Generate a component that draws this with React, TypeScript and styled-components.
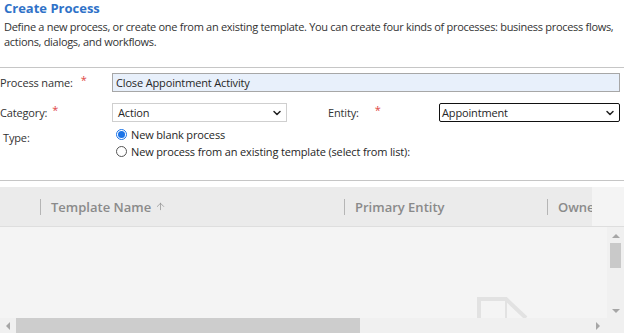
import React from 'react'
import styled, { createGlobalStyle } from 'styled-components'
import { ChevronDown, ArrowUp } from 'lucide-react'

const GlobalStyle = createGlobalStyle`
    html, body {
        margin: 0;
        padding: 0;
        background: #ffffff;
        overflow: hidden;
    }
    body {
        font-family: "Open Sans", "Noto Sans", sans-serif;
        color: #262626;
    }
`

const Page = styled.div`
    width: 624px;
    height: 333px;
    display: flex;
    flex-direction: column;
    overflow: hidden;
`

const Intro = styled.div`
    padding: 1px 4px 0;
    height: 67px;
    box-sizing: border-box;
`

const Title = styled.h1`
    margin: 0;
    font-size: 13px;
    line-height: 15px;
    font-weight: 700;
    color: #2f72c8;
`

const Description = styled.p`
    margin: 3px 0 0;
    font-size: 11px;
    line-height: 15px;
    color: #333;
    letter-spacing: -0.3px;
    white-space: nowrap;
`

const Rule = styled.div`
    height: 1px;
    background: #c6c6c6;
    flex-shrink: 0;
`

const Form = styled.div`
    display: grid;
    grid-template-columns: 112px 175px 152px 181px;
    grid-template-rows: 30px 25px auto;
    padding-top: 5px;
    height: 112px;
    box-sizing: border-box;
`

const Label = styled.div<{ $indent?: number }>`
    font-size: 11px;
    color: #333;
    display: flex;
    align-items: center;
    height: 19px;
    padding-left: ${({ $indent }) => $indent ?? 0}px;
    letter-spacing: -0.15px;
`

const Required = styled.span<{ $gap: number }>`
    color: #e04646;
    font-size: 11px;
    margin-left: ${({ $gap }) => $gap}px;
    position: relative;
    top: -3px;
`

const TextInput = styled.div`
    grid-column: 2 / 5;
    height: 19px;
    box-sizing: border-box;
    border: 1px solid #a7a7a7;
    background: #e8f0fb;
    font-size: 11px;
    padding-left: 3px;
    display: flex;
    align-items: center;
    letter-spacing: -0.15px;
`

const Select = styled.div<{ $focused?: boolean }>`
    height: 19px;
    box-sizing: border-box;
    border: ${({ $focused }) => ($focused ? '1.5px solid #111' : '1px solid #cfcfcf')};
    border-radius: ${({ $focused }) => ($focused ? '2px' : '0')};
    font-size: 11px;
    padding: 0 3px 0 ${({ $focused }) => ($focused ? '2px' : '5px')};
    display: flex;
    align-items: center;
    justify-content: space-between;
    background: #fff;
    letter-spacing: -0.15px;
`

const Options = styled.div`
    grid-column: 2 / 5;
    display: flex;
    flex-direction: column;
    padding-left: 4px;
    margin-top: -2px;
`

const Option = styled.label`
    display: flex;
    align-items: center;
    gap: 4px;
    font-size: 11px;
    line-height: 17px;
    letter-spacing: -0.15px;
`

const Radio = styled.span<{ $checked?: boolean }>`
    width: 11px;
    height: 11px;
    border-radius: 50%;
    box-sizing: border-box;
    border: 1px solid ${({ $checked }) => ($checked ? '#1a73e8' : '#555')};
    display: flex;
    align-items: center;
    justify-content: center;
    &::after {
        content: "";
        width: 7px;
        height: 7px;
        border-radius: 50%;
        background: ${({ $checked }) => ($checked ? '#1a73e8' : 'transparent')};
    }
`

const Grid = styled.div`
    margin-top: 6px;
    flex: 1;
    display: grid;
    grid-template-columns: 1fr 17px;
    grid-template-rows: 40px 1fr 15px;
    background: #f4f4f4;
`

const HeaderRow = styled.div`
    background: #ebebeb;
    border-bottom: 1px solid #dedede;
    display: flex;
    align-items: center;
    overflow: hidden;
`

const HeaderCell = styled.div<{ $width: number }>`
    width: ${({ $width }) => $width}px;
    flex-shrink: 0;
    display: flex;
    align-items: center;
    gap: 4px;
    font-size: 13px;
    font-weight: 600;
    color: #8a8a8a;
    white-space: nowrap;
    overflow: hidden;
    &::before {
        content: "";
        flex-shrink: 0;
        width: 1px;
        height: 16px;
        background: #b5b5b5;
        margin-right: 6px;
    }
`

const HeaderSpacer = styled.div`
    width: 40px;
    flex-shrink: 0;
`

const HeaderFill = styled.div`
    flex: 1;
    align-self: stretch;
    background: #f4f4f4;
`

const HeaderCorner = styled.div`
    background: #f4f4f4;
    border-bottom: 1px solid #dedede;
`

const Body = styled.div`
    display: flex;
    justify-content: flex-end;
    align-items: flex-end;
    padding-right: 75px;
    overflow: hidden;
`

const VScroll = styled.div`
    background: #f0f0f0;
    display: flex;
    flex-direction: column;
    align-items: center;
    padding: 6px 0 4px;
    box-sizing: border-box;
`

const VThumb = styled.div`
    width: 11px;
    height: 25px;
    background: #c9c9c9;
    margin-top: 4px;
`

const HScroll = styled.div`
    background: #f0f0f0;
    display: flex;
    align-items: center;
    padding: 0 6px 0 5px;
`

const HThumb = styled.div`
    width: 344px;
    height: 15px;
    background: #cdcdcd;
    margin-left: 5px;
`

const Corner = styled.div`
    background: #f0f0f0;
`

const Arrow = ({ dir }: { dir: 'up' | 'down' | 'left' | 'right' }) => {
    const points = {
        up: '0,5 4,1 8,5',
        down: '0,1 8,1 4,5',
        left: '5,0 5,8 1,4',
        right: '1,0 1,8 5,4',
    }[dir]
    const vertical = dir === 'up' || dir === 'down'
    return (
        <svg width={vertical ? 8 : 6} height={vertical ? 6 : 8} viewBox={vertical ? '0 0 8 6' : '0 0 6 8'}>
            <polygon points={points} fill="#a6a6a6" />
        </svg>
    )
}

const App = () => {
    return (
        <Page>
            <GlobalStyle />
            <Intro>
                <Title>Create Process</Title>
                <Description>
                    Define a new process, or create one from an existing template. You can create four kinds of processes: business process flows,
                    <br />
                    actions, dialogs, and workflows.
                </Description>
            </Intro>
            <Rule />
            <Form>
                <Label>
                    Process name:<Required $gap={8}>*</Required>
                </Label>
                <TextInput>Close Appointment Activity</TextInput>

                <Label>
                    Category:<Required $gap={5}>*</Required>
                </Label>
                <Select>
                    Action
                    <ChevronDown size={12} strokeWidth={3} color="#222" />
                </Select>
                <Label $indent={41}>
                    Entity:<Required $gap={16}>*</Required>
                </Label>
                <Select $focused>
                    Appointment
                    <ChevronDown size={12} strokeWidth={3} color="#222" />
                </Select>

                <Label $indent={3}>Type:</Label>
                <Options>
                    <Option>
                        <Radio $checked />
                        New blank process
                    </Option>
                    <Option>
                        <Radio />
                        New process from an existing template (select from list):
                    </Option>
                </Options>
            </Form>
            <Rule />
            <Grid>
                <HeaderRow>
                    <HeaderSpacer />
                    <HeaderCell $width={304}>
                        Template Name
                        <ArrowUp size={11} strokeWidth={1.5} />
                    </HeaderCell>
                    <HeaderCell $width={203}>Primary Entity</HeaderCell>
                    <HeaderCell $width={45}>Owner</HeaderCell>
                    <HeaderFill />
                </HeaderRow>
                <HeaderCorner />
                <Body>
                    <svg width="56" height="22" viewBox="0 0 56 22">
                        <path d="M3 22 V3 H30 L50 22" fill="none" stroke="#e2e2e2" strokeWidth="4" />
                        <path d="M30 3 V22" fill="none" stroke="#e2e2e2" strokeWidth="2" />
                    </svg>
                </Body>
                <VScroll>
                    <Arrow dir="up" />
                    <VThumb />
                    <div style={{ flex: 1 }} />
                    <Arrow dir="down" />
                </VScroll>
                <HScroll>
                    <Arrow dir="left" />
                    <HThumb />
                    <div style={{ flex: 1 }} />
                    <Arrow dir="right" />
                </HScroll>
                <Corner />
            </Grid>
        </Page>
    )
}

export default App
